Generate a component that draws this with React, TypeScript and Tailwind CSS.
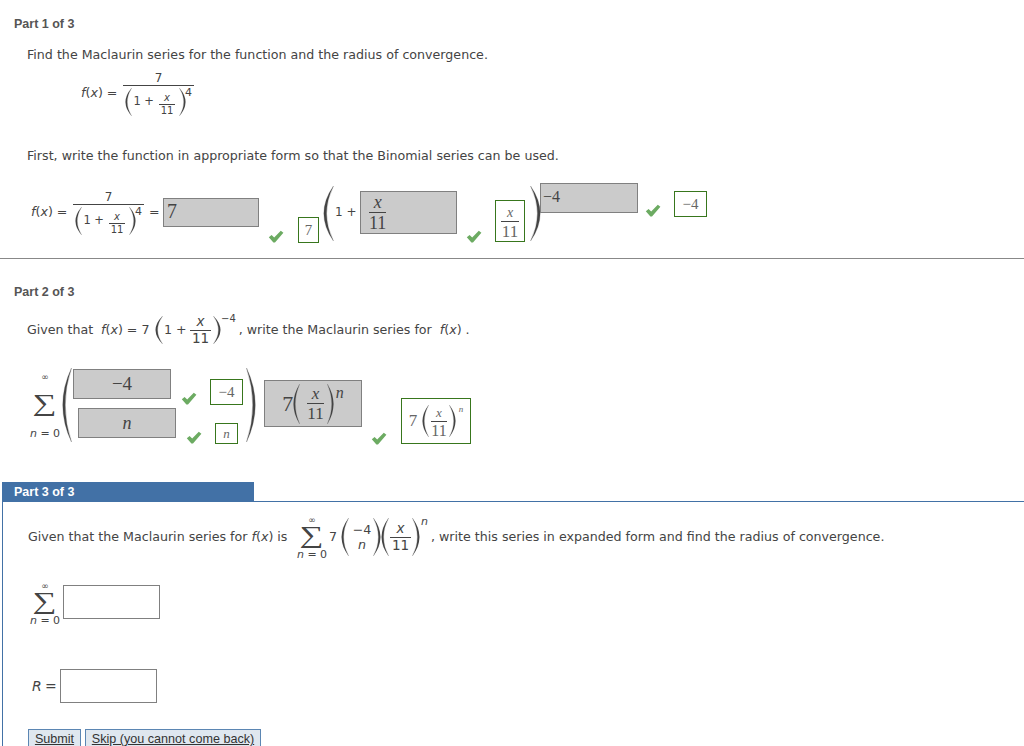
import type { ReactNode } from "react";

function Paren({ side, w, h, className = "" }: { side: "l" | "r"; w: number; h: number; className?: string }) {
    const d = side === "l" ? "M9.5 0 Q-8 50 9.5 100 Q-3 50 9.5 0Z" : "M.5 0 Q18 50 .5 100 Q13 50 .5 0Z";
    return (
        <svg width={w} height={h} viewBox="0 0 10 100" preserveAspectRatio="none" className={`shrink-0 ${className}`}>
            <path d={d} fill="#444" stroke="#444" strokeWidth="0.3" />
        </svg>
    );
}

function Check({ className = "" }: { className?: string }) {
    return (
        <svg width="16" height="13" viewBox="0 0 16 13" className={`shrink-0 ${className}`}>
            <path d="M.8 7.2 3.6 5l2.6 2.6L12.8.8l2.6 2L7 12.4H5.4Z" fill="#6cab62" />
        </svg>
    );
}

function Frac({ num, den, barClass = "w-full" }: { num: ReactNode; den: ReactNode; barClass?: string }) {
    return (
        <span className="flex flex-col items-center shrink-0">
            <span className="leading-none">{num}</span>
            <span className={`h-px bg-[#444] my-px ${barClass}`} />
            <span className="leading-none">{den}</span>
        </span>
    );
}

function Heading({ children }: { children: ReactNode }) {
    return <div className="font-['Liberation_Sans',Arial,sans-serif] font-bold text-[12.5px] leading-[14px] text-[#555]">{children}</div>;
}

function Sum({ className = "", sigmaClass = "" }: { className?: string; sigmaClass?: string }) {
    return (
        <div className={`flex flex-col items-center w-[30px] shrink-0 text-[#444] ${className}`}>
            <span className="text-[9px] leading-[10px]">∞</span>
            <span className={`font-['Liberation_Serif',serif] text-[24px] leading-[24px] h-[24px] scale-x-[1.4] -translate-y-[2px] ${sigmaClass}`}>∑</span>
            <span className={`text-[11px] leading-[12px] whitespace-nowrap ${sigmaClass}`}><i>n</i> = 0</span>
        </div>
    );
}

// 1 + x/11 under the bar, shared by the two fractions of part 1
function SmallDenom() {
    return (
        <span className="flex items-center justify-end w-[71px] pr-[2px] h-[30px] text-[11.5px] leading-none whitespace-nowrap">
            <Paren side="l" w={7} h={28} />
            <span className="ml-px">1 +</span>
            <span className="ml-[5px] mt-[4px] text-[10px]"><Frac num={<i>x</i>} den="11" barClass="w-[16px]" /></span>
            <Paren side="r" w={7} h={28} className="ml-[4px]" />
            <span className="self-start -ml-[1px] text-[11px]">4</span>
        </span>
    );
}

function Gray({ className = "", children }: { className?: string; children?: ReactNode }) {
    return <div className={`bg-[#cbcbcb] border border-[#808080] font-['Liberation_Serif',serif] text-[#444] shrink-0 ${className}`}>{children}</div>;
}

function Answer({ className = "", children }: { className?: string; children?: ReactNode }) {
    return (
        <div className={`border border-[#38761d] bg-white font-['Liberation_Serif',serif] text-[#666] flex items-center justify-center shrink-0 ${className}`}>
            {children}
        </div>
    );
}

export default function App() {
    return (
        <div className="w-[1024px] h-[746px] overflow-hidden bg-white text-[#444] text-[12.65px] font-['DejaVu_Sans',Verdana,sans-serif]">
            {/* Part 1 */}
            <div className="h-[259px] border-b border-[#888] pt-[17px]">
                <div className="pl-[14px]"><Heading>Part 1 of 3</Heading></div>
                <p className="pl-[27px] mt-[15px] leading-[18px]">Find the Maclaurin series for the function and the radius of convergence.</p>

                <div className="flex items-start pl-[81px] mt-[5px] h-[50px]">
                    <span className="mt-[15px] w-[42px] whitespace-nowrap"><i>f</i>(<i>x</i>) =</span>
                    <div className="mt-[3px]">
                        <Frac num={<span className="text-[12px] leading-[12px] block">7</span>} den={<SmallDenom />} barClass="w-[71px]" />
                    </div>
                </div>

                <p className="pl-[27px] mt-[28px] leading-[18px]">First, write the function in appropriate form so that the Binomial series can be used.</p>

                <div className="flex items-start pl-[31px] mt-[18px] h-[64px]">
                    <span className="mt-[20px] whitespace-nowrap w-[42px]"><i>f</i>(<i>x</i>) =</span>
                    <div className="mt-[8px] w-[71px] shrink-0">
                        <Frac num={<span className="text-[12px] leading-[12px] block">7</span>} den={<SmallDenom />} barClass="w-[71px]" />
                    </div>
                    <span className="ml-[5px] mt-[20px] w-[14px]">=</span>
                    <Gray className="w-[96px] h-[29px] mt-[15px] text-[20px] leading-[25px] pl-[3px]">7</Gray>
                    <Check className="ml-[9px] mt-[47px]" />
                    <Answer className="ml-[14px] mt-[34px] w-[21px] h-[26px] text-[15px]">7</Answer>
                    <Paren side="l" w={11} h={55} className="ml-[4px] mt-[3px]" />
                    <span className="text-[12px] mt-[20px] ml-[1px] whitespace-nowrap w-[25px]">1 +</span>
                    <Gray className="w-[97px] h-[43px] mt-[8px] flex items-center pl-[8px] text-[18px]">
                        <Frac num={<i>x</i>} den="11" />
                    </Gray>
                    <Check className="ml-[9px] mt-[47px]" />
                    <Answer className="ml-[13px] mt-[17px] w-[30px] h-[42px] text-[17px]">
                        <Frac num={<i className="text-[14px]">x</i>} den="11" barClass="w-[18px]" />
                    </Answer>
                    <Paren side="r" w={11} h={55} className="ml-[5px] mt-[3px]" />
                    <Gray className="w-[98px] h-[30px] text-[16px] leading-[26px] pl-[2px] -ml-px">−4</Gray>
                    <Check className="ml-[7px] mt-[21px]" />
                    <Answer className="ml-[13px] mt-[8px] w-[33px] h-[26px] text-[15px]">−4</Answer>
                </div>
            </div>

            {/* Part 2 */}
            <div className="h-[223px] pt-[26px]">
                <div className="pl-[14px]"><Heading>Part 2 of 3</Heading></div>
                <div className="flex items-center pl-[27px] mt-[11px] h-[40px] whitespace-nowrap">
                    <span className="w-[74px]">Given that</span>
                    <span className="w-[49px]"><i>f</i>(<i>x</i>) = 7</span>
                    <Paren side="l" w={8} h={28} className="ml-[5px]" />
                    <span className="ml-[1px] w-[26px]">1 +</span>
                    <span className="text-[13.5px]"><Frac num={<i>x</i>} den="11" barClass="w-[21px]" /></span>
                    <Paren side="r" w={8} h={28} className="ml-[2px]" />
                    <span className="self-start mt-[1px] text-[10px]">−4</span>
                    <span className="ml-[3px]">, write the Maclaurin series for</span>
                    <span className="ml-[8px]"><i>f</i>(<i>x</i>) .</span>
                </div>

                <div className="flex items-start pl-[30px] mt-[18px] h-[78px]">
                    <Sum className="mt-[4px]" sigmaClass="mt-[11px]" />
                    <Paren side="l" w={10} h={74} className="ml-[2px]" />
                    <div className="flex flex-col shrink-0 w-[170px] ml-[1px] mt-[1px]">
                        <div className="flex items-start">
                            <Gray className="w-[98px] h-[30px] text-[19px] text-center leading-[28px]">−4</Gray>
                            <Check className="ml-[10px] mt-[23px]" />
                            <Answer className="ml-[13px] mt-[10px] w-[33px] h-[26px] text-[15px]">−4</Answer>
                        </div>
                        <div className="flex items-start mt-[3px] pl-[5px]">
                            <Gray className="w-[98px] h-[30px] text-[18px] italic text-center leading-[28px]">n</Gray>
                            <Check className="ml-[10px] mt-[23px]" />
                            <Answer className="ml-[13px] mt-[15px] w-[23px] h-[21px] text-[13px] italic">n</Answer>
                        </div>
                    </div>
                    <Paren side="r" w={10} h={74} className="ml-[3px]" />
                    <Gray className="w-[98px] h-[47px] mt-[12px] ml-[8px] flex items-center justify-center text-[22px]">
                        7
                        <Paren side="l" w={7} h={40} className="mr-[7px]" />
                        <span className="text-[17px]"><Frac num={<i>x</i>} den="11" /></span>
                        <Paren side="r" w={7} h={40} className="ml-[3px]" />
                        <i className="self-start mt-[2px] ml-[2px] text-[16px] leading-[20px]">n</i>
                    </Gray>
                    <Check className="ml-[9px] mt-[64px]" />
                    <Answer className="ml-[14px] mt-[30px] w-[70px] h-[46px] text-[17px]">
                        7
                        <Paren side="l" w={7} h={32} className="ml-[5px] mr-[2px]" />
                        <span className="text-[16px]"><Frac num={<i className="text-[13px]">x</i>} den="11" /></span>
                        <Paren side="r" w={7} h={32} className="ml-[2px]" />
                        <i className="self-start mt-[4px] ml-[3px] text-[9px] leading-[12px]">n</i>
                    </Answer>
                </div>
            </div>

            {/* Part 3 */}
            <div className="h-[264px] flex flex-col">
                <div className="flex items-end h-[20px] pl-[2px] shrink-0">
                    <div className="w-[252px] h-[20px] bg-[#4271a6] pl-[12px] pt-[3px]">
                        <div className="font-['Liberation_Sans',Arial,sans-serif] font-bold text-[12.5px] leading-[14px] text-white">Part 3 of 3</div>
                    </div>
                    <div className="flex-1 border-b border-[#4271a6]" />
                </div>
                <div className="ml-[2px] border-l border-[#4271a6] flex-1 pl-[25px]">
                    <div className="flex items-center mt-[13px] h-[44px] whitespace-nowrap">
                        <span className="w-[261px]">Given that the Maclaurin series for <i>f</i>(<i>x</i>) is</span>
                        <Sum className="ml-[8px] mt-[2px]" />
                        <span className="ml-[2px] w-[8px]">7</span>
                        <Paren side="l" w={8} h={38} className="ml-[4px]" />
                        <span className="flex flex-col items-center ml-[4px] leading-[15px] w-[18px]">
                            <span>−4</span>
                            <i>n</i>
                        </span>
                        <Paren side="r" w={8} h={38} className="ml-[2px]" />
                        <Paren side="l" w={8} h={38} />
                        <span className="ml-[1px] text-[13.5px]"><Frac num={<i>x</i>} den="11" barClass="w-[21px]" /></span>
                        <Paren side="r" w={8} h={38} className="ml-[1px]" />
                        <i className="self-start ml-px text-[11px] leading-[13px]">n</i>
                        <span className="ml-[3px]">, write this series in expanded form and find the radius of convergence.</span>
                    </div>

                    <div className="flex items-start mt-[22px]">
                        <Sum className="ml-[2px]" />
                        <div className="w-[97px] h-[34px] ml-[3px] mt-[4px] border border-[#808080] bg-white" />
                    </div>

                    <div className="flex items-center mt-[42px] text-[14px]">
                        <i className="ml-[4px] w-[13px]">R</i>
                        <span className="w-[15px]">=</span>
                        <div className="w-[97px] h-[34px] border border-[#808080] bg-white" />
                    </div>

                    <div className="flex items-start gap-[4px] mt-[26px] font-['Liberation_Sans',Arial,sans-serif] text-[12.6px] text-[#333]">
                        <button className="w-[53px] h-[20px] bg-[#dfe7ef] border border-[#5b86b3] underline leading-[16px]">Submit</button>
                        <button className="w-[176px] h-[20px] bg-[#dfe7ef] border border-[#5b86b3] underline leading-[16px]">Skip (you cannot come back)</button>
                    </div>
                </div>
            </div>
        </div>
    );
}
